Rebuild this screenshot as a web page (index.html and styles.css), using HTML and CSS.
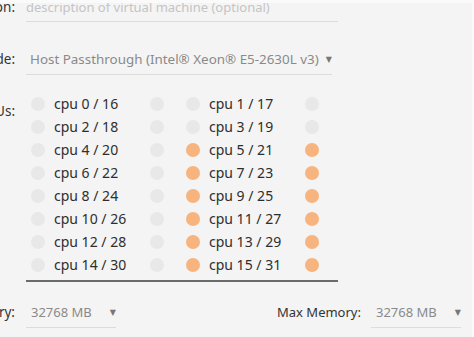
FILE: index.html
```html
<!DOCTYPE html>
<html>
<head>
<meta charset="utf-8">
<link rel="stylesheet" href="styles.css">
</head>
<body>
<div class="panel">
  <div class="row row-desc">
    <div class="label">Description:</div>
    <div class="field field-desc"><span class="placeholder">description of virtual machine (optional)</span></div>
  </div>
  <div class="row row-mode">
    <div class="label">CPU Mode:</div>
    <div class="field field-mode"><span class="value">Host Passthrough (Intel® Xeon® E5-2630L v3)</span><span class="arrow">▼</span></div>
  </div>
  <div class="row row-cpus">
    <div class="label label-cpus">CPUs:</div>
    <div class="cpus">
      <div class="cpu"><span class="dot"></span><span class="name">cpu 0 / 16</span><span class="dot"></span></div>
      <div class="cpu"><span class="dot"></span><span class="name">cpu 1 / 17</span><span class="dot"></span></div>
      <div class="cpu"><span class="dot"></span><span class="name">cpu 2 / 18</span><span class="dot"></span></div>
      <div class="cpu"><span class="dot"></span><span class="name">cpu 3 / 19</span><span class="dot"></span></div>
      <div class="cpu"><span class="dot"></span><span class="name">cpu 4 / 20</span><span class="dot"></span></div>
      <div class="cpu"><span class="dot on"></span><span class="name">cpu 5 / 21</span><span class="dot on"></span></div>
      <div class="cpu"><span class="dot"></span><span class="name">cpu 6 / 22</span><span class="dot"></span></div>
      <div class="cpu"><span class="dot on"></span><span class="name">cpu 7 / 23</span><span class="dot on"></span></div>
      <div class="cpu"><span class="dot"></span><span class="name">cpu 8 / 24</span><span class="dot"></span></div>
      <div class="cpu"><span class="dot on"></span><span class="name">cpu 9 / 25</span><span class="dot on"></span></div>
      <div class="cpu"><span class="dot"></span><span class="name">cpu 10 / 26</span><span class="dot"></span></div>
      <div class="cpu"><span class="dot on"></span><span class="name">cpu 11 / 27</span><span class="dot on"></span></div>
      <div class="cpu"><span class="dot"></span><span class="name">cpu 12 / 28</span><span class="dot"></span></div>
      <div class="cpu"><span class="dot on"></span><span class="name">cpu 13 / 29</span><span class="dot on"></span></div>
      <div class="cpu"><span class="dot"></span><span class="name">cpu 14 / 30</span><span class="dot"></span></div>
      <div class="cpu"><span class="dot on"></span><span class="name">cpu 15 / 31</span><span class="dot on"></span></div>
    </div>
  </div>
  <div class="row row-mem">
    <div class="label">Memory:</div>
    <div class="field field-mem"><span class="value">32768 MB</span><span class="arrow">▼</span></div>
    <div class="label label-max">Max Memory:</div>
    <div class="field field-mem"><span class="value">32768 MB</span><span class="arrow">▼</span></div>
  </div>
</div>
</body>
</html>
```

FILE: styles.css
```css
html, body {
  margin: 0;
  padding: 0;
  background: #fafafa;
  overflow: hidden;
}
body {
  width: 474px;
  height: 337px;
  font-family: "Noto Sans", "DejaVu Sans", sans-serif;
  font-size: 13px;
  color: #333;
}
.panel {
  position: relative;
  width: 472px;
  height: 334px;
  margin-top: 3px;
  background: #f4f4f4;
  overflow: hidden;
}
.row {
  display: flex;
  align-items: flex-start;
  margin-left: -85px;
  line-height: 18px;
}
.label {
  width: 100px;
  flex: none;
  text-align: right;
  color: #333;
  margin-right: 11px;
  font-size: 13.5px;
}
.field {
  border-bottom: 1px solid #dcdcdc;
  display: flex;
  align-items: flex-start;
  box-sizing: border-box;
}
.row-desc {
  margin-top: -5px;
}
.field-desc {
  width: 312px;
  height: 24px;
}
.placeholder {
  color: #c4c4c4;
}
.row-mode {
  margin-top: 28px;
}
.field-mode {
  width: 306px;
  height: 25px;
  padding-left: 4px;
  justify-content: space-between;
}
.field-mode .value {
  font-size: 13.4px;
}
.value {
  color: #8a8a8a;
}
.arrow {
  font-size: 8px;
  color: #777;
  line-height: 18px;
}
.row-cpus {
  margin-top: 17px;
}
.label-cpus {
  margin-top: 10px;
}
.cpus {
  width: 312px;
  display: grid;
  grid-template-columns: 155px 157px;
  grid-auto-rows: 23px;
  padding-bottom: 4px;
  border-bottom: 2px solid #6b6b6b;
}
.cpu {
  display: flex;
  align-items: center;
  padding-left: 5px;
}
.dot {
  width: 14px;
  height: 14px;
  border-radius: 50%;
  background: #e8e8e8;
  flex: none;
}
.dot.on {
  background: #f7b47e;
}
.name {
  width: 96px;
  margin-left: 9px;
  font-size: 14px;
  color: #2e2e2e;
}
.row-mem {
  margin-top: 21px;
}
.field-mem {
  width: 90px;
  height: 25px;
  padding-left: 5px;
  justify-content: space-between;
}
.label-max {
  width: auto;
  margin-left: 161px;
  margin-right: 10px;
  font-size: 13px;
}
```
